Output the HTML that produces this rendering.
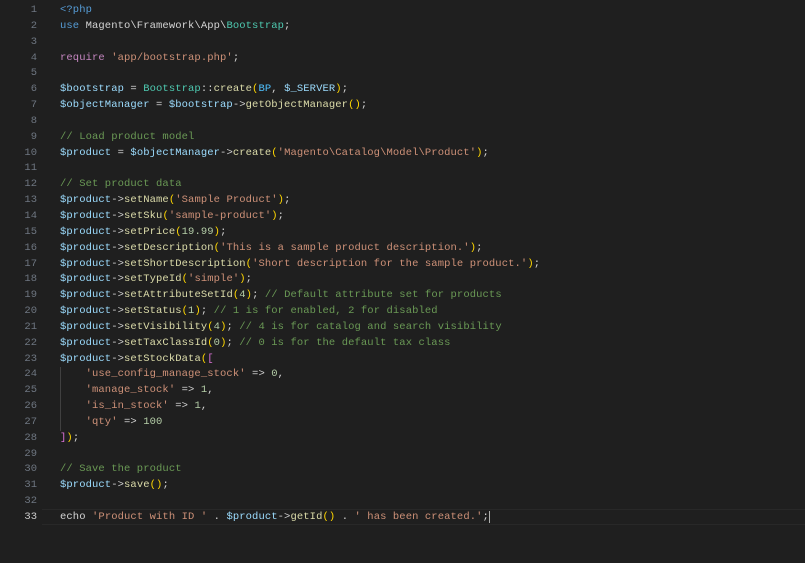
<!DOCTYPE html>
<html><head><style>
html,body{margin:0;padding:0;background:#1f1f1f;width:805px;height:563px;overflow:hidden}
.ed{position:absolute;left:0;top:3px;font-family:"Liberation Mono",monospace;font-size:10.5px;line-height:15.84px;color:#d4d4d4;white-space:pre}
.ln{position:absolute;left:0;width:37px;text-align:right;color:#6e7681}
.ln .a{color:#cccccc}
.c{position:absolute;left:60px;width:740px;letter-spacing:0.1px}
.cur{position:absolute;left:42px;top:509px;width:763px;height:16px;border-top:1px solid #282828;border-bottom:1px solid #282828;box-sizing:border-box}
.g{position:absolute;left:60px;width:1px;background:#404040}
.v{color:#9cdcfe}.f{color:#dcdcaa}.s{color:#ce9178}.k{color:#569cd6}.p{color:#c586c0}
.m{color:#6a9955}.t{color:#4ec9b0}.n{color:#b5cea8}.y{color:#ffd700}.pu{color:#da70d6}.co{color:#4fc1ff}
</style></head><body>
<div class="cur"></div>
<div class="g" style="top:367px;height:64px"></div>
<div class="ed"><div class="ln">1
2
3
4
5
6
7
8
9
10
11
12
13
14
15
16
17
18
19
20
21
22
23
24
25
26
27
28
29
30
31
32
<span class="a">33</span></div><div class="c"><span class="k">&lt;?php</span>
<span class="k">use</span> Magento\Framework\App\<span class="t">Bootstrap</span>;

<span class="p">require</span> <span class="s">'app/bootstrap.php'</span>;

<span class="v">$bootstrap</span> = <span class="t">Bootstrap</span>::<span class="f">create</span><span class="y">(</span><span class="co">BP</span>, <span class="v">$_SERVER</span><span class="y">)</span>;
<span class="v">$objectManager</span> = <span class="v">$bootstrap</span>-&gt;<span class="f">getObjectManager</span><span class="y">()</span>;

<span class="m">// Load product model</span>
<span class="v">$product</span> = <span class="v">$objectManager</span>-&gt;<span class="f">create</span><span class="y">(</span><span class="s">'Magento\Catalog\Model\Product'</span><span class="y">)</span>;

<span class="m">// Set product data</span>
<span class="v">$product</span>-&gt;<span class="f">setName</span><span class="y">(</span><span class="s">'Sample Product'</span><span class="y">)</span>;
<span class="v">$product</span>-&gt;<span class="f">setSku</span><span class="y">(</span><span class="s">'sample-product'</span><span class="y">)</span>;
<span class="v">$product</span>-&gt;<span class="f">setPrice</span><span class="y">(</span><span class="n">19.99</span><span class="y">)</span>;
<span class="v">$product</span>-&gt;<span class="f">setDescription</span><span class="y">(</span><span class="s">'This is a sample product description.'</span><span class="y">)</span>;
<span class="v">$product</span>-&gt;<span class="f">setShortDescription</span><span class="y">(</span><span class="s">'Short description for the sample product.'</span><span class="y">)</span>;
<span class="v">$product</span>-&gt;<span class="f">setTypeId</span><span class="y">(</span><span class="s">'simple'</span><span class="y">)</span>;
<span class="v">$product</span>-&gt;<span class="f">setAttributeSetId</span><span class="y">(</span><span class="n">4</span><span class="y">)</span>; <span class="m">// Default attribute set for products</span>
<span class="v">$product</span>-&gt;<span class="f">setStatus</span><span class="y">(</span><span class="n">1</span><span class="y">)</span>; <span class="m">// 1 is for enabled, 2 for disabled</span>
<span class="v">$product</span>-&gt;<span class="f">setVisibility</span><span class="y">(</span><span class="n">4</span><span class="y">)</span>; <span class="m">// 4 is for catalog and search visibility</span>
<span class="v">$product</span>-&gt;<span class="f">setTaxClassId</span><span class="y">(</span><span class="n">0</span><span class="y">)</span>; <span class="m">// 0 is for the default tax class</span>
<span class="v">$product</span>-&gt;<span class="f">setStockData</span><span class="y">(</span><span class="pu">[</span>
    <span class="s">'use_config_manage_stock'</span> =&gt; <span class="n">0</span>,
    <span class="s">'manage_stock'</span> =&gt; <span class="n">1</span>,
    <span class="s">'is_in_stock'</span> =&gt; <span class="n">1</span>,
    <span class="s">'qty'</span> =&gt; <span class="n">100</span>
<span class="pu">]</span><span class="y">)</span>;

<span class="m">// Save the product</span>
<span class="v">$product</span>-&gt;<span class="f">save</span><span class="y">()</span>;

echo <span class="s">'Product with ID '</span> . <span class="v">$product</span>-&gt;<span class="f">getId</span><span class="y">()</span> . <span class="s">' has been created.'</span>;<span style="border-left:1px solid #aeafad"></span></div></div>
</body></html>
